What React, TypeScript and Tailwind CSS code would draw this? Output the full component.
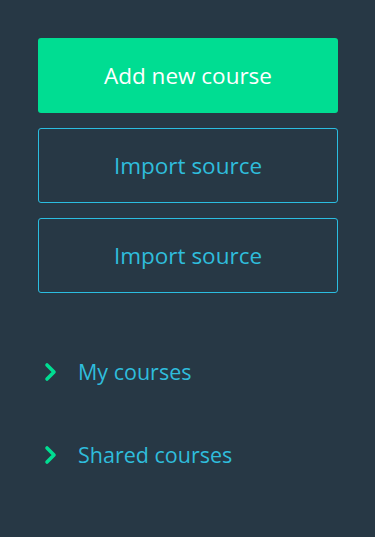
import React from "react";

function Chevron() {
  return (
    <svg width="16" height="20" viewBox="0 0 16 20" className="shrink-0">
      <path d="M4 3 L11 10 L4 17" fill="none" stroke="#00dd92" strokeWidth="3.6" strokeLinecap="round" strokeLinejoin="round" />
    </svg>
  );
}

export default function App() {
  return (
    <div className="w-[375px] h-[537px] bg-[#273845] font-['Open_Sans',sans-serif] overflow-hidden">
      <div className="pt-[38px] px-[38px] flex flex-col gap-[15px]">
        <button className="h-[75px] w-[300px] rounded-[3px] bg-[#00dd92] text-white text-[22.5px]">Add new course</button>
        <button className="h-[75px] w-[300px] rounded-[3px] border border-[#2bbde0] text-[#2fbddc] text-[22.5px]">Import source</button>
        <button className="h-[75px] w-[300px] rounded-[3px] border border-[#2bbde0] text-[#2fbddc] text-[22.5px]">Import source</button>
      </div>
      <div className="mt-[65px] pl-[43px] flex flex-col gap-[55px]">
        <div className="flex items-center gap-[19px] h-[28px]">
          <Chevron />
          <span className="text-[21.5px] text-[#2fbddc]">My courses</span>
        </div>
        <div className="flex items-center gap-[19px] h-[28px]">
          <Chevron />
          <span className="text-[21.5px] text-[#2fbddc]">Shared courses</span>
        </div>
      </div>
    </div>
  );
}
